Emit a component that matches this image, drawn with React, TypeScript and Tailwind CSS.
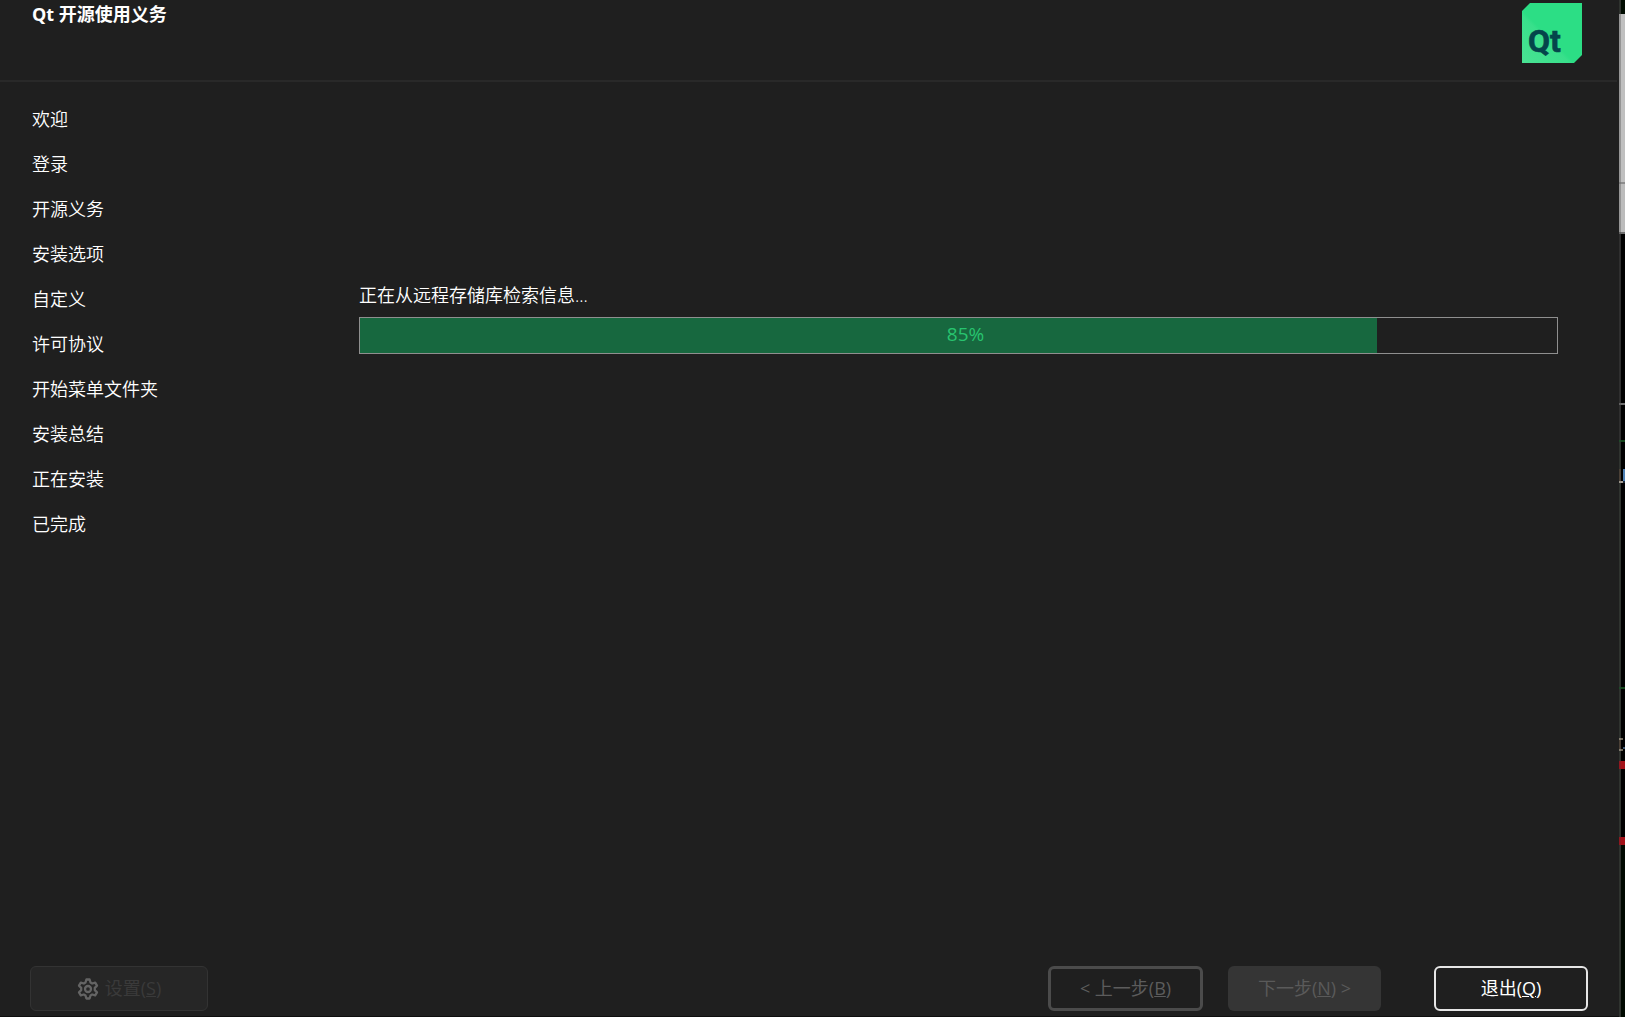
import clsx from 'clsx';

const STEPS = [
  '欢迎',
  '登录',
  '开源义务',
  '安装选项',
  '自定义',
  '许可协议',
  '开始菜单文件夹',
  '安装总结',
  '正在安装',
  '已完成',
];

const PROGRESS = 85;

// Slices of the window lying behind the installer, top to bottom
const BACKDROP = [
  'h-[14px] border-[#2f332f] bg-[#000c00]',
  'h-[168px] border-[#959595] bg-[#c0c0c0]',
  'h-[2px] border-[#7c7c7c] bg-[#8c8c8c]',
  'h-[48px] border-[#959595] bg-[#bcbcbc]',
  'h-[2px] border-[#606060] bg-[#707070]',
  'h-[169px] border-[#2f2f2f] bg-black',
  'h-[2px] border-[#606060] bg-[#707070]',
  'h-[35px] border-[#2f2f2f] bg-black',
  'h-[2px] border-[#1f4a2a] bg-[#14451c]',
  'h-[27px] border-[#2f332f] bg-black',
  'h-[12px] border-[#4a4036] bg-linear-to-r from-black from-50% to-[#4f81b5] to-50%',
  'h-[2px] border-[#9a958c] bg-linear-to-r from-[#a89f94] from-50% to-[#1c2a3a] to-50%',
  'h-[204px] border-[#2f332f] bg-black',
  'h-[2px] border-[#1f4a2a] bg-[#14451c]',
  'h-[49px] border-[#2f332f] bg-black',
  'h-[2px] border-[#837d70] bg-linear-to-r from-[#6f675a] from-50% to-black to-50%',
  'h-[7px] border-[#4a4036] bg-black',
  'h-[2px] border-[#4a4036] bg-linear-to-r from-black from-50% to-[#3d556e] to-50%',
  'h-[2px] border-[#837d70] bg-linear-to-r from-[#6f675a] from-50% to-black to-50%',
  'h-[10px] border-[#2f332f] bg-black',
  'h-[8px] border-[#8f1820] bg-[#a31118]',
  'h-[68px] border-[#2f332f] bg-black',
  'h-[8px] border-[#8f1820] bg-[#a31118]',
  'grow border-[#2f332f] bg-[#000900]',
];

const QtLogo = () => (
  <svg className="size-15" viewBox="0 0 60 60" role="img" aria-label="Qt">
    <defs>
      <linearGradient id="qt-green" x1="0" y1="1" x2="0.8" y2="0.2">
        <stop offset="0" stopColor="#4ae293" />
        <stop offset="0.5" stopColor="#38e08b" />
        <stop offset="0.55" stopColor="#2cde85" />
        <stop offset="1" stopColor="#2cde85" />
      </linearGradient>
    </defs>
    <path d="M8 0H60V52L52 60H0V8Z" fill="url(#qt-green)" />
    <text
      x="6"
      y="49"
      fill="#04454b"
      stroke="#04454b"
      strokeWidth="0.6"
      className="font-[Roboto,sans-serif] text-[32px] font-bold"
    >
      Qt
    </text>
  </svg>
);

const GearIcon = () => (
  <svg
    className="size-[22px]"
    viewBox="0 0 22 22"
    fill="none"
    stroke="currentColor"
    strokeWidth="2.3"
    strokeLinejoin="round"
    aria-hidden="true"
  >
    <path d="M9.4 1.5h3.2l.9 3 1.7 1 3-.8 1.8 3-2.2 2.2v2.2l2.2 2.2-1.8 3-3-.8-1.7 1-.9 3H9.4l-.9-3-1.7-1-3 .8-1.8-3 2.2-2.2V9.9L2 7.7l1.8-3 3 .8 1.7-1z" />
    <circle cx="11" cy="11" r="3" />
  </svg>
);

export default function App() {
  return (
    <div className="flex min-h-screen bg-[#1f1f1f] font-['Open_Sans','Noto_Sans_CJK_SC',sans-serif] text-[18px] leading-[27px] text-white">
      <div className="flex grow flex-col border-b border-[#0e0e0e]">
        <header className="mr-0.5 flex h-[82px] items-start justify-between border-b-2 border-[#292929] pl-8 pr-[35px]">
          <h1 className="pt-px font-bold">Qt 开源使用义务</h1>
          <div className="pt-[3px]">
            <QtLogo />
          </div>
        </header>

        <div className="flex grow">
          <ol className="flex w-[359px] shrink-0 flex-col gap-[18px] pl-8 pt-6 font-[350]">
            {STEPS.map((step) => (
              <li key={step}>{step}</li>
            ))}
          </ol>
          <main className="grow pr-[61px] pt-[200px]">
            <p id="progress-label" className="font-[350]">
              正在从远程存储库检索信息...
            </p>
            <div
              role="progressbar"
              aria-labelledby="progress-label"
              aria-valuenow={PROGRESS}
              aria-valuemin={0}
              aria-valuemax={100}
              className="relative mt-2 h-[37px] border border-[#8f8f8f]"
            >
              <div className="h-full bg-[#17683f]" style={{ width: `${PROGRESS}%` }} />
              <span className="absolute inset-0 pl-3.5 text-center text-[19px] leading-[33px] text-[#27c46f]">
                {PROGRESS}%
              </span>
            </div>
          </main>
        </div>

        <footer className="flex pb-[5px] pl-[30px] pr-[31px]">
          <button
            disabled
            className="flex h-[45px] w-[178px] items-center justify-center gap-1.5 rounded-md border border-[#333333] bg-[#262626] text-[#3a3a3a]"
          >
            <span className="text-[#646464]">
              <GearIcon />
            </span>
            <span>
              设置(<u>S</u>)
            </span>
          </button>
          <button
            disabled
            className="ml-auto h-[45px] w-[155px] rounded-md border-3 border-[#4b4b4b] text-[#5c5c5c]"
          >
            &lt; 上一步(<u>B</u>)
          </button>
          <button disabled className="ml-[25px] h-[45px] w-[153px] rounded-md bg-[#353535] text-[#5a5a5a]">
            下一步(<u>N</u>) &gt;
          </button>
          <button className="ml-[53px] h-[45px] w-[154px] rounded-md border-2 border-[#e6e6e6]">
            退出(<u>Q</u>)
          </button>
        </footer>
      </div>

      <div className="flex w-1.5 shrink-0 flex-col" aria-hidden="true">
        {BACKDROP.map((slice, i) => (
          <div key={i} className={clsx('border-l-2', slice)} />
        ))}
      </div>
    </div>
  );
}
